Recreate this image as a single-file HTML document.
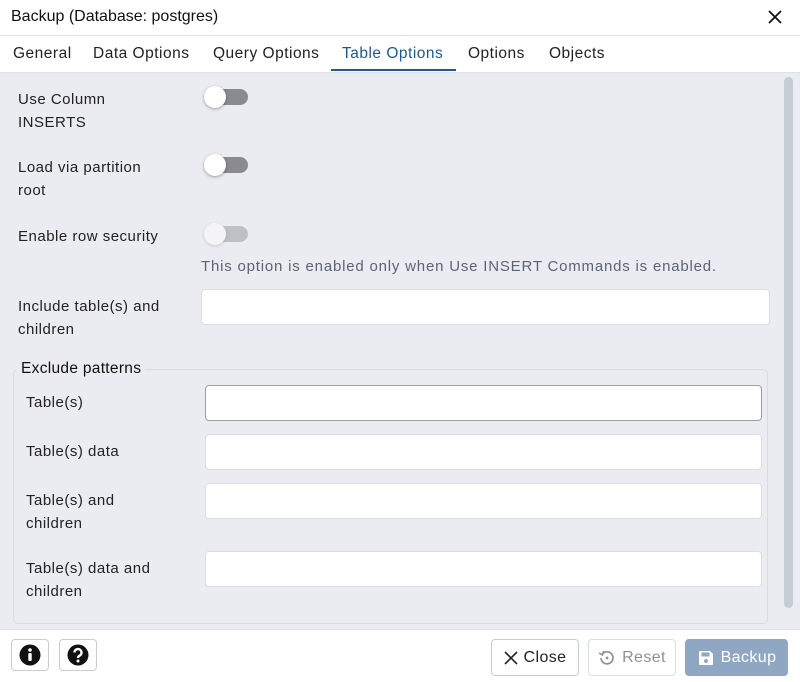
<!DOCTYPE html>
<html><head><style>
*{box-sizing:border-box;margin:0;padding:0}
body{width:800px;height:682px;background:#fff;font-family:"Liberation Sans",sans-serif;color:#222;position:relative;overflow:hidden;font-size:15px}
.a{position:absolute}
.title{left:11px;top:8px;font-size:16px;color:#111}
.tab{top:45px;font-size:15.5px;color:#222;letter-spacing:0.5px}
.content{left:0;top:72px;width:800px;height:558px;background:#ebecf1;border-top:1px solid #dde0e6;border-bottom:1px solid #dde0e6}
.lbl{font-size:15px;color:#222;line-height:23px;letter-spacing:0.5px;top:0}
.tog{width:42px;height:16px;border-radius:8px;background:#8a8b90}
.tog::after{content:"";position:absolute;left:-2px;top:-3px;width:22px;height:22px;border-radius:50%;background:#fff;box-shadow:0 1px 3px rgba(0,0,0,.35)}
.inp{background:#fff;border:1px solid #dadde3;border-radius:4px;height:36px}
.btn{border:1px solid #c9ccd2;border-radius:4px;background:#fff;height:37px;font-size:16px;letter-spacing:0.4px;display:flex;align-items:center;justify-content:center;gap:6px}
</style></head><body>
<div class="a title">Backup (Database: postgres)</div>
<svg class="a" style="left:768px;top:10px" width="14" height="14" viewBox="0 0 14 14"><path d="M1 1L13 13M13 1L1 13" stroke="#111" stroke-width="1.8"/></svg>
<div class="a" style="left:0;top:35px;width:800px;height:1px;background:#dde0e6"></div>
<div class="a tab" style="left:13px">General</div>
<div class="a tab" style="left:93px">Data Options</div>
<div class="a tab" style="left:213px">Query Options</div>
<div class="a tab" style="left:342px;color:#1d5b91">Table Options</div>
<div class="a" style="left:331px;top:69px;width:125px;height:2px;background:#1d5b91"></div>
<div class="a tab" style="left:468px">Options</div>
<div class="a tab" style="left:549px">Objects</div>
<div class="a content"></div>
<div class="a" style="left:784px;top:77px;width:9px;height:531px;border-radius:5px;background:#c7ccd4"></div>
<div class="a lbl" style="left:18px;top:88px">Use Column<br>INSERTS</div>
<div class="a tog" style="left:206px;top:89px"></div>
<div class="a lbl" style="left:18px;top:156px">Load via partition<br>root</div>
<div class="a tog" style="left:206px;top:157px"></div>
<div class="a lbl" style="left:18px;top:225px">Enable row security</div>
<div class="a tog" style="left:206px;top:226px;opacity:.45"></div>
<div class="a" style="left:201px;top:258px;font-size:15px;color:#5b6474;letter-spacing:0.8px">This option is enabled only when Use INSERT Commands is enabled.</div>
<div class="a lbl" style="left:18px;top:295px">Include table(s) and<br>children</div>
<div class="a inp" style="left:201px;top:289px;width:569px"></div>
<div class="a" style="left:13px;top:369px;width:755px;height:255px;border:1px solid #d8dbe1;border-radius:5px"></div>
<div class="a" style="left:17px;top:360px;padding:0 4px;background:#ebecf1;font-size:15.5px;color:#111;letter-spacing:0.3px">Exclude patterns</div>
<div class="a lbl" style="left:26px;top:391px">Table(s)</div>
<div class="a inp" style="left:205px;top:385px;width:557px;border-color:#9a9ea6"></div>
<div class="a lbl" style="left:26px;top:440px">Table(s) data</div>
<div class="a inp" style="left:205px;top:434px;width:557px"></div>
<div class="a lbl" style="left:26px;top:489px">Table(s) and<br>children</div>
<div class="a inp" style="left:205px;top:483px;width:557px"></div>
<div class="a lbl" style="left:26px;top:557px">Table(s) data and<br>children</div>
<div class="a inp" style="left:205px;top:551px;width:557px"></div>
<div class="a btn" style="left:11px;top:639px;width:38px;height:32px"><svg width="22" height="22" viewBox="0 0 22 22"><circle cx="11" cy="11" r="10.5" fill="#111"/><circle cx="11" cy="6" r="1.8" fill="#fff"/><rect x="9.3" y="9" width="3.4" height="8" rx="1" fill="#fff"/></svg></div>
<div class="a btn" style="left:59px;top:639px;width:38px;height:32px"><svg width="22" height="22" viewBox="0 0 22 22"><circle cx="11" cy="11" r="10.5" fill="#111"/><path d="M7.5 8.5a3.5 3.5 0 1 1 5 3.2c-1 .5-1.5 1-1.5 2.3" stroke="#fff" stroke-width="2.4" fill="none"/><circle cx="11" cy="17" r="1.5" fill="#fff"/></svg></div>
<div class="a btn" style="left:491px;top:639px;width:88px;color:#222"><svg width="14" height="14" viewBox="0 0 14 14"><path d="M1 1L13 13M13 1L1 13" stroke="#222" stroke-width="1.6"/></svg>Close</div>
<div class="a btn" style="left:588px;top:639px;width:88px;color:#8c9097;border-color:#dadde3"><svg width="18" height="18" viewBox="0 0 18 18"><path d="M4 5.5A6 6 0 1 1 3 9" stroke="#8c9097" stroke-width="1.7" fill="none"/><path d="M1 4l3.5 2L5.5 2" stroke="#8c9097" stroke-width="1.5" fill="none"/><circle cx="9" cy="9" r="1.4" fill="#8c9097"/></svg>Reset</div>
<div class="a btn" style="left:685px;top:639px;width:103px;background:#8fa7c3;border-color:#8fa7c3;color:#fff"><svg width="18" height="18" viewBox="0 0 18 18"><path d="M2 3a1 1 0 0 1 1-1h10l3 3v10a1 1 0 0 1-1 1H3a1 1 0 0 1-1-1z" fill="#fff"/><rect x="4.5" y="3.5" width="8" height="4" fill="#8fa7c3"/><circle cx="9" cy="12" r="2" fill="#8fa7c3"/></svg>Backup</div>
</body></html>
